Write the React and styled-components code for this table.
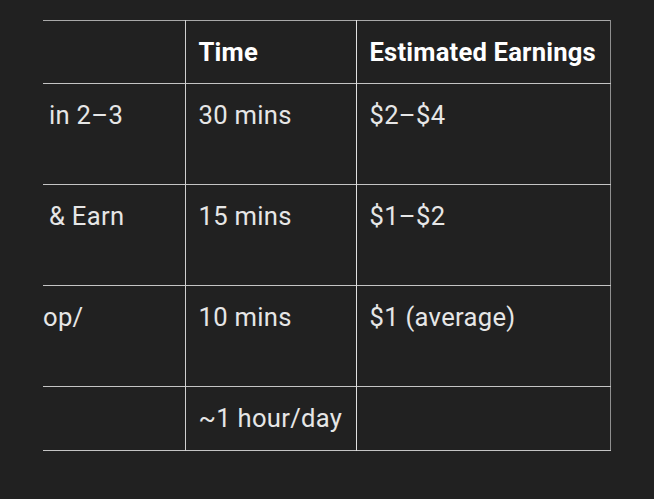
import React from 'react';
import styled, { createGlobalStyle } from 'styled-components';

const GlobalStyle = createGlobalStyle`
  html, body {
    margin: 0;
    background: #212121;
  }
  body {
    font-family: Roboto, "Noto Sans", "Liberation Sans", sans-serif;
    color: #e6e6e6;
  }
`;

const rows = [
  { lead: 'in 2–3', inset: 6, time: '30 mins', earn: '$2–$4', tall: true },
  { lead: '& Earn', inset: 6, time: '15 mins', earn: '$1–$2', tall: true },
  { lead: 'op/', inset: 0, time: '10 mins', earn: '$1 (average)', tall: true },
  { lead: '', inset: 6, time: '~1 hour/day', earn: '', tall: false }
];

const Page = styled.div`
  display: flex;
  padding: 20px 0 0 43px;
`;

const Table = styled.table`
  border-collapse: collapse;
  table-layout: fixed;
  width: 567px;
  font-size: 25.6px;
  line-height: 38.4px;
  letter-spacing: 0.3px;
  border-top: 1px solid #a9a9a9;
  border-right: 1px solid #8f8f8f;
`;

const Row = styled.tr`
  border-bottom: 1px solid #c4c4c4;
  height: ${p => (p.$tall ? '101px' : 'auto')};
`;

const Head = styled.th`
  text-align: left;
  font-weight: 700;
  color: #ffffff;
  padding: 12px 13px;
  vertical-align: top;
  white-space: nowrap;
  letter-spacing: 0.2px;
  border-left: 1px solid ${p => p.$line || '#e0e0e0'};
`;

const Cell = styled.td`
  padding: 12px 13px;
  vertical-align: top;
  white-space: nowrap;
  border-left: 1px solid ${p => p.$line || '#e0e0e0'};
`;

const Lead = styled.td`
  padding: 12px 0 12px ${p => p.$inset}px;
  vertical-align: top;
  white-space: nowrap;
  overflow: hidden;
`;

export default function App() {
  return (
    <>
      <GlobalStyle />
      <Page>
        <Table>
          <colgroup>
            <col style={{ width: 142 }} />
            <col style={{ width: 171 }} />
            <col style={{ width: 254 }} />
          </colgroup>
          <thead>
            <Row>
              <Lead as="th" $inset={6} />
              <Head $line="#cfcfcf">Time</Head>
              <Head>Estimated Earnings</Head>
            </Row>
          </thead>
          <tbody>
            {rows.map((r, i) => (
              <Row key={i} $tall={r.tall}>
                <Lead $inset={r.inset}>{r.lead}</Lead>
                <Cell $line="#cfcfcf">{r.time}</Cell>
                <Cell>{r.earn}</Cell>
              </Row>
            ))}
          </tbody>
        </Table>
      </Page>
    </>
  );
}
